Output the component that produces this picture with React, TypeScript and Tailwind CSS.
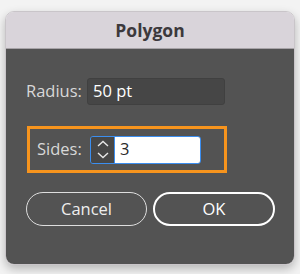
import React from "react";

const font = { fontFamily: '"Open Sans", "Liberation Sans", sans-serif' };

export default function App() {
  return (
    <div className="w-[300px] h-[274px] bg-[#f3f3f3] pt-[11px] px-[5px]" style={font}>
      <div className="h-[254px] rounded-[9px] overflow-hidden shadow-[0_4px_10px_rgba(0,0,0,0.25)] border border-[#c9c5c9] flex flex-col">
        <div className="h-[37px] shrink-0 bg-[#d9d4da] border-b border-[#a7a3a7] flex items-center justify-center">
          <span className="text-[17.5px] font-bold text-[#3c393c]">Polygon</span>
        </div>
        <div className="flex-1 bg-[#535353] flex flex-col">
          <div className="mt-[29px] flex items-center pl-[20px]">
            <span className="w-[61px] text-[16.5px] text-[#d8d8d8]">Radius:</span>
            <div className="w-[138px] h-[27px] rounded-[3px] bg-[#464646] border border-[#404040] flex items-center pl-[5px] text-[16.5px] text-white">
              50 pt
            </div>
          </div>
          <div className="mt-[21px] ml-[21px] w-[200px] h-[47px] border-[3px] border-[#f7941d] flex items-center pl-[7px]">
            <span className="w-[53px] text-[16.5px] text-[#d8d8d8]">Sides:</span>
            <div className="w-[111px] h-[28px] rounded-[3px] border border-[#3b8ef0] flex overflow-hidden">
              <div className="w-[24px] bg-[#474747] border-r border-[#3b8ef0] flex flex-col items-center justify-center gap-[5px]">
                <svg width="12" height="7" viewBox="0 0 12 7" fill="none" stroke="#e6e6e6" strokeWidth="1.4">
                  <path d="M1 6 L6 1.5 L11 6" />
                </svg>
                <svg width="12" height="7" viewBox="0 0 12 7" fill="none" stroke="#e6e6e6" strokeWidth="1.4">
                  <path d="M1 1 L6 5.5 L11 1" />
                </svg>
              </div>
              <div className="flex-1 bg-white flex items-center pl-[5px] text-[16.5px] text-[#2a2a2a]">3</div>
            </div>
          </div>
          <div className="mt-[19px] flex gap-[6px] pl-[20px]">
            <button className="w-[121px] h-[34px] rounded-full border-[1.5px] border-[#dedede] text-[16.5px] text-[#eeeeee]">
              Cancel
            </button>
            <button className="w-[122px] h-[34px] rounded-full border-[2.5px] border-white text-[16.5px] text-white">
              OK
            </button>
          </div>
        </div>
      </div>
    </div>
  );
}
